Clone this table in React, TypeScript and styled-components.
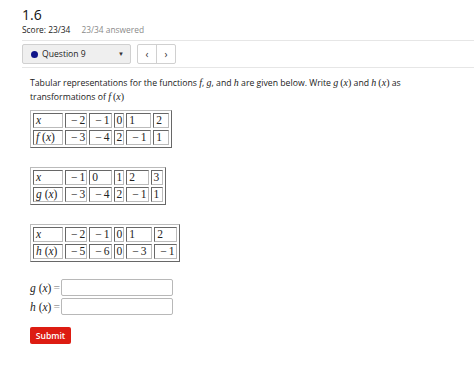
import React from 'react';
import styled, { createGlobalStyle } from 'styled-components';

const GlobalStyle = createGlobalStyle`
  body {
    margin: 0;
    background: #fff;
    font-family: "Open Sans", "Liberation Sans", sans-serif;
    color: #222;
  }
`;

type Cell = number | string;

interface TableSpec {
    name: string;
    xs: Cell[];
    ys: Cell[];
    widths: number[];
}

const tables: TableSpec[] = [
    { name: 'f', xs: [-2, -1, 0, 1, 2], ys: [-3, -4, 2, -1, 1], widths: [30, 20, 20, 9, 25, 16] },
    { name: 'g', xs: [-1, 0, 1, 2, 3], ys: [-3, -4, 2, -1, 1], widths: [30, 20, 18, 10, 21, 12] },
    { name: 'h', xs: [-2, -1, 0, 1, 2], ys: [-5, -6, 0, -3, -1], widths: [30, 19, 19, 9, 26, 20] },
];

const serif = `"Liberation Serif", "DejaVu Serif", "Times New Roman", serif`;

const Page = styled.div`
  padding: 5px 0 0 22px;
`;

const Title = styled.div`
  font-size: 14px;
  line-height: 19px;
  color: #111;
`;

const ScoreLine = styled.div`
  font-size: 8.4px;
  line-height: 11px;
  display: flex;
  gap: 11px;
  padding-bottom: 5px;
  border-bottom: 1px solid #e6e6e6;
`;

const Muted = styled.span`
  color: #8a8a8a;
`;

const NavBar = styled.div`
  display: flex;
  align-items: center;
  gap: 6px;
  padding: 3px 0 3px;
  border-bottom: 1px solid #e6e6e6;
`;

const Select = styled.div`
  width: 109px;
  height: 20px;
  box-sizing: border-box;
  background: #efefef;
  border: 1px solid #d0d0d0;
  border-radius: 2px;
  display: flex;
  align-items: center;
  padding: 0 6px 0 8px;
  font-size: 8.6px;
  color: #222;
`;

const Dot = styled.span`
  width: 7px;
  height: 7px;
  border-radius: 50%;
  background: #10168a;
  margin-right: 4px;
`;

const Caret = styled.span`
  margin-left: auto;
  font-size: 6px;
  color: #333;
`;

const NavGroup = styled.div`
  display: flex;
  height: 20px;
  border: 1px solid #d0d0d0;
  border-radius: 2px;
  box-sizing: border-box;
`;

const NavButton = styled.div<{ $first?: boolean }>`
  width: 18px;
  display: flex;
  align-items: center;
  justify-content: center;
  font-size: 10px;
  color: #333;
  border-right: ${p => (p.$first ? '1px solid #d0d0d0' : 'none')};
`;

const Body = styled.div`
  padding: 8px 0 0 8px;
`;

const Prompt = styled.p`
  margin: 0;
  font-size: 8.7px;
  line-height: 13px;
  color: #222;
  width: 380px;
`;

const MathVar = styled.span`
  font-family: ${serif};
  font-style: italic;
  font-size: 1.15em;
`;

const MathParen = styled.span`
  font-family: ${serif};
  font-size: 1.15em;
  padding-left: 2px;
`;

const Tables = styled.div`
  display: flex;
  flex-direction: column;
  align-items: flex-start;
  gap: 19px;
  margin-top: 6px;
`;

const ValueTable = styled.table`
  border: 1px outset #bbb;
  border-spacing: 2px;
`;

const Td = styled.td<{ $w: number }>`
  width: ${p => p.$w}px;
  height: 15px;
  box-sizing: border-box;
  border: 1px inset #bbb;
  padding: 0 1px 0 2px;
  white-space: nowrap;
  text-align: left;
  line-height: 13px;
  font-family: ${serif};
  font-size: 11.5px;
  color: #222;
`;

const Minus = styled.span`
  margin: 0 2px 0 3px;
`;

const Italic = styled.i`
  font-family: ${serif};
  font-style: italic;
`;

const Answers = styled.div`
  margin-top: 17px;
  display: flex;
  flex-direction: column;
  gap: 2px;
`;

const AnswerRow = styled.div`
  display: flex;
  align-items: center;
`;

const AnswerLabel = styled.span`
  font-family: ${serif};
  font-size: 11.5px;
  color: #222;
  width: 31px;
  white-space: nowrap;
`;

const Eq = styled.span`
  color: #999;
  margin-left: 2px;
`;

const AnswerInput = styled.input`
  width: 112px;
  height: 17px;
  box-sizing: border-box;
  border: 1px solid #b8b8b8;
  border-radius: 2px;
  margin: 0;
`;

const Submit = styled.button`
  margin-top: 12px;
  width: 41px;
  height: 17px;
  background: #dd1c12;
  color: #fff;
  border: none;
  border-radius: 2px;
  font-family: "Open Sans", "Liberation Sans", sans-serif;
  font-size: 8.6px;
  font-weight: 600;
  padding: 0;
`;

const Num: React.FC<{ v: Cell }> = ({ v }) => {
    if (typeof v === 'number' && v < 0) {
        return (<><Minus>−</Minus>{Math.abs(v)}</>);
    }
    return <>{v}</>;
};

const Fn: React.FC<{ name: string }> = ({ name }) => (
    <><Italic>{name}</Italic>{' '}(<Italic>x</Italic>)</>
);

const App: React.FC = () => {
    return (
        <>
            <GlobalStyle />
            <Page>
                <Title>1.6</Title>
                <ScoreLine>
                    <span>Score: 23/34</span>
                    <Muted>23/34 answered</Muted>
                </ScoreLine>
                <NavBar>
                    <Select>
                        <Dot />
                        Question 9
                        <Caret>▼</Caret>
                    </Select>
                    <NavGroup>
                        <NavButton $first>‹</NavButton>
                        <NavButton>›</NavButton>
                    </NavGroup>
                </NavBar>
                <Body>
                    <Prompt>
                        Tabular representations for the functions <MathVar>f</MathVar>, <MathVar>g</MathVar>, and{' '}
                        <MathVar>h</MathVar> are given below. Write <MathVar>g</MathVar><MathParen>(<i>x</i>)</MathParen> and{' '}
                        <MathVar>h</MathVar><MathParen>(<i>x</i>)</MathParen> as transformations of{' '}
                        <MathVar>f</MathVar><MathParen>(<i>x</i>)</MathParen>
                    </Prompt>
                    <Tables>
                        {tables.map(t => (
                            <ValueTable key={t.name}>
                                <tbody>
                                    <tr>
                                        <Td $w={t.widths[0]}><Italic>x</Italic></Td>
                                        {t.xs.map((v, i) => (
                                            <Td key={i} $w={t.widths[i + 1]}><Num v={v} /></Td>
                                        ))}
                                    </tr>
                                    <tr>
                                        <Td $w={t.widths[0]}><Fn name={t.name} /></Td>
                                        {t.ys.map((v, i) => (
                                            <Td key={i} $w={t.widths[i + 1]}><Num v={v} /></Td>
                                        ))}
                                    </tr>
                                </tbody>
                            </ValueTable>
                        ))}
                    </Tables>
                    <Answers>
                        <AnswerRow>
                            <AnswerLabel><Fn name="g" /><Eq>=</Eq></AnswerLabel>
                            <AnswerInput />
                        </AnswerRow>
                        <AnswerRow>
                            <AnswerLabel><Fn name="h" /><Eq>=</Eq></AnswerLabel>
                            <AnswerInput />
                        </AnswerRow>
                    </Answers>
                    <Submit>Submit</Submit>
                </Body>
            </Page>
        </>
    );
};

export default App;
